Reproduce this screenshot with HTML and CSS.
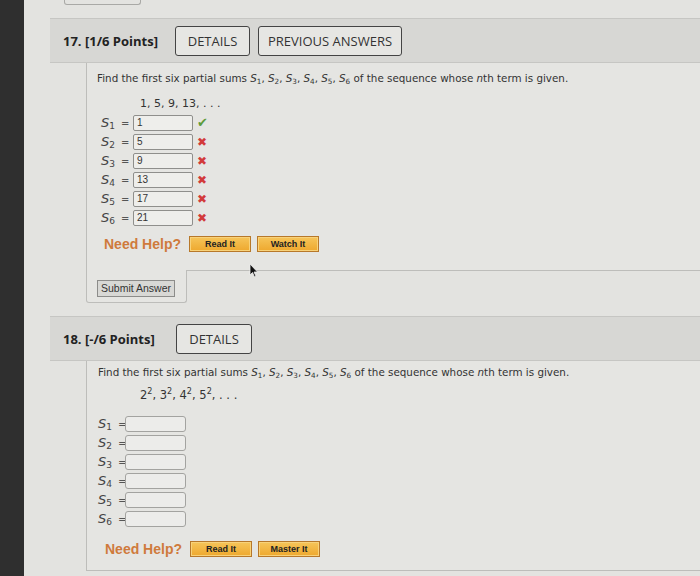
FILE: index.html
```html
<!DOCTYPE html>
<html>
<head>
<meta charset="utf-8">
<link rel="stylesheet" href="styles.css">
</head>
<body>
<div class="strip"></div>
<div class="page">
  <div class="prev-tab"></div>

  <div class="qhead">
    <span class="qnum">17. [1/6 Points]</span>
    <span class="tbtn details">DETAILS</span>
    <span class="tbtn prev">PREVIOUS ANSWERS</span>
  </div>
  <div class="qbody">
    <p class="prompt">Find the first six partial sums <i>S</i><sub>1</sub>, <i>S</i><sub>2</sub>, <i>S</i><sub>3</sub>, <i>S</i><sub>4</sub>, <i>S</i><sub>5</sub>, <i>S</i><sub>6</sub> of the sequence whose <i>n</i>th term is given.</p>
    <p class="seq">1, 5, 9, 13, . . .</p>
    <div class="rows r17">
      <div class="row"><span class="lbl"><i>S</i><sub>1</sub></span><span class="eq">=</span><span class="box">1</span><span class="mark ok">&#10004;</span></div>
      <div class="row"><span class="lbl"><i>S</i><sub>2</sub></span><span class="eq">=</span><span class="box">5</span><span class="mark bad">&#10006;</span></div>
      <div class="row"><span class="lbl"><i>S</i><sub>3</sub></span><span class="eq">=</span><span class="box">9</span><span class="mark bad">&#10006;</span></div>
      <div class="row"><span class="lbl"><i>S</i><sub>4</sub></span><span class="eq">=</span><span class="box">13</span><span class="mark bad">&#10006;</span></div>
      <div class="row"><span class="lbl"><i>S</i><sub>5</sub></span><span class="eq">=</span><span class="box">17</span><span class="mark bad">&#10006;</span></div>
      <div class="row"><span class="lbl"><i>S</i><sub>6</sub></span><span class="eq">=</span><span class="box">21</span><span class="mark bad">&#10006;</span></div>
    </div>
    <div class="help">
      <span class="need">Need Help?</span>
      <span class="hbtn">Read It</span>
      <span class="hbtn">Watch It</span>
    </div>
  </div>
  <div class="submit-row">
    <div class="submit-tab"><span class="submit">Submit Answer</span></div>
    <div class="submit-rest"></div>
  </div>

  <div class="qhead q18">
    <span class="qnum">18. [-/6 Points]</span>
    <span class="tbtn details">DETAILS</span>
  </div>
  <div class="qbody b18">
    <p class="prompt">Find the first six partial sums <i>S</i><sub>1</sub>, <i>S</i><sub>2</sub>, <i>S</i><sub>3</sub>, <i>S</i><sub>4</sub>, <i>S</i><sub>5</sub>, <i>S</i><sub>6</sub> of the sequence whose <i>n</i>th term is given.</p>
    <p class="seq">2<sup>2</sup>, 3<sup>2</sup>, 4<sup>2</sup>, 5<sup>2</sup>, . . .</p>
    <div class="rows r18">
      <div class="row"><span class="lbl"><i>S</i><sub>1</sub></span><span class="eq">=</span><span class="box"></span></div>
      <div class="row"><span class="lbl"><i>S</i><sub>2</sub></span><span class="eq">=</span><span class="box"></span></div>
      <div class="row"><span class="lbl"><i>S</i><sub>3</sub></span><span class="eq">=</span><span class="box"></span></div>
      <div class="row"><span class="lbl"><i>S</i><sub>4</sub></span><span class="eq">=</span><span class="box"></span></div>
      <div class="row"><span class="lbl"><i>S</i><sub>5</sub></span><span class="eq">=</span><span class="box"></span></div>
      <div class="row"><span class="lbl"><i>S</i><sub>6</sub></span><span class="eq">=</span><span class="box"></span></div>
    </div>
    <div class="help">
      <span class="need">Need Help?</span>
      <span class="hbtn">Read It</span>
      <span class="hbtn">Master It</span>
    </div>
  </div>

  <svg class="cursor" width="10" height="15" viewBox="0 0 10 15"><path d="M1 1 L1 12 L3.5 9.5 L5.5 14 L7 13.3 L5 9 L8.5 9 Z" fill="#111" stroke="#eee" stroke-width="0.8"/></svg>
</div>
</body>
</html>
```

FILE: styles.css
```css
html, body {
  margin: 0;
  padding: 0;
  width: 700px;
  height: 576px;
  overflow: hidden;
}
body {
  display: flex;
  background: #e2e2df;
}
.strip {
  width: 24px;
  flex: none;
  background: #2f2f2f;
}
.page {
  flex: 1;
  background: #e3e3e0;
  position: relative;
}
.prev-tab {
  margin-left: 40px;
  width: 75px;
  height: 4px;
  border: 1px solid #a9a9a6;
  border-top: none;
  border-radius: 0 0 3px 3px;
}
.qhead {
  margin-top: 13px;
  margin-left: 26px;
  height: 43px;
  background: #d7d7d4;
  border-top: 1px solid #c6c6c3;
  border-bottom: 1px solid #c6c6c3;
  display: flex;
  align-items: center;
  font-family: "Open Sans", "DejaVu Sans", sans-serif;
  color: #222;
}
.qnum {
  margin-left: 13px;
  font-weight: bold;
  font-size: 13px;
  width: 112px;
}
.tbtn {
  box-sizing: border-box;
  height: 30px;
  border: 1.5px solid #444;
  border-radius: 3px;
  display: flex;
  align-items: center;
  justify-content: center;
  font-size: 13px;
  color: #333;
  background: #e6e6e3;
}
.details { width: 75px; }
.prev { width: 144px; margin-left: 8px; }
.q18 .qnum { width: 113px; }
.q18 .details { width: 76px; }
.q18 { margin-top: 13px; }

.qbody {
  margin-left: 62px;
  border-left: 1px solid #bdbdba;
  padding: 7px 0 0 10px;
  height: 200px;
  background: #e5e5e2;
  font-family: "DejaVu Sans", Verdana, sans-serif;
  color: #333;
}
.b18 {
  box-sizing: border-box;
  height: 210px;
  padding-left: 11px;
  padding-top: 3px;
  border-bottom: 1px solid #bdbdba;
}
.prompt {
  margin: 0;
  font-size: 10.35px;
  line-height: 16px;
}
.prompt i, .lbl i {
  font-style: italic;
}
sub {
  font-size: 70%;
  vertical-align: -2px;
}
sup {
  font-size: 70%;
  vertical-align: 5px;
}
.seq {
  margin: 6px 0 0 43px;
  font-size: 11px;
  line-height: 16px;
}
.b18 .seq { margin-top: 0; margin-left: 42px; font-size: 11.5px; }
.rows {
  margin-top: 3px;
  display: flex;
  flex-direction: column;
  gap: 3px;
}
.row {
  display: flex;
  align-items: center;
  height: 16px;
}
.lbl {
  font-size: 13px;
  width: 20px;
  margin-left: 4px;
  color: #444;
}
.lbl sub { font-size: 9px; vertical-align: -2px; }
.eq {
  font-size: 10px;
  width: 9px;
  margin-right: 3px;
  color: #555;
}
.box {
  box-sizing: border-box;
  width: 60px;
  height: 16px;
  border: 1px solid #8f8f8c;
  border-radius: 2px;
  background: #eeeeeb;
  font-family: "Liberation Sans", Arial, sans-serif;
  font-size: 10px;
  line-height: 14px;
  padding-left: 3px;
  color: #333;
}
.mark {
  margin-left: 4px;
  font-size: 13px;
  line-height: 16px;
  font-family: "DejaVu Sans", sans-serif;
}
.ok { color: #5d9b3a; }
.bad { color: #d23a3a; font-size: 12px; }
.r18 { margin-top: 13px; }
.r18 .lbl { margin-left: 0; width: 20px; }
.r18 .eq { width: 7px; margin-right: 0; font-size: 11px; }
.r18 .box { width: 61px; border-color: #a3a3a0; background: #ececea; border-radius: 3px; }

.help {
  margin-top: 10px;
  display: flex;
  align-items: center;
  gap: 6px;
  margin-left: 7px;
}
.b18 .help { margin-top: 14px; }
.need {
  font-family: "Liberation Sans", Arial, sans-serif;
  font-weight: bold;
  font-size: 14px;
  color: #cf7a3c;
  width: 79px;
}
.hbtn {
  box-sizing: border-box;
  width: 62px;
  height: 16px;
  background: linear-gradient(#f6c55a, #eea82e);
  border: 1px solid #b7782a;
  box-shadow: inset 0 0 0 1px #f8d27a;
  display: flex;
  align-items: center;
  justify-content: center;
  font-family: "Liberation Sans", Arial, sans-serif;
  font-weight: bold;
  font-size: 9px;
  color: #222;
}

.submit-row {
  display: flex;
  margin-left: 62px;
  height: 33px;
}
.submit-tab {
  box-sizing: border-box;
  width: 101px;
  border: 1px solid #bdbdba;
  border-top: none;
  border-radius: 0 0 3px 3px;
  background: #e5e5e2;
  display: flex;
  align-items: flex-start;
  padding: 10px 0 0 10px;
}
.submit-rest {
  flex: 1;
  border-top: 1px solid #bdbdba;
  margin-left: -1px;
}
.submit {
  box-sizing: border-box;
  height: 17px;
  padding: 0 3px;
  border: 1px solid #8c8c8a;
  background: #d8d8d5;
  font-family: "Liberation Sans", Arial, sans-serif;
  font-size: 10.5px;
  line-height: 15px;
  color: #333;
}
.cursor {
  position: absolute;
  left: 225px;
  top: 263px;
}
```
